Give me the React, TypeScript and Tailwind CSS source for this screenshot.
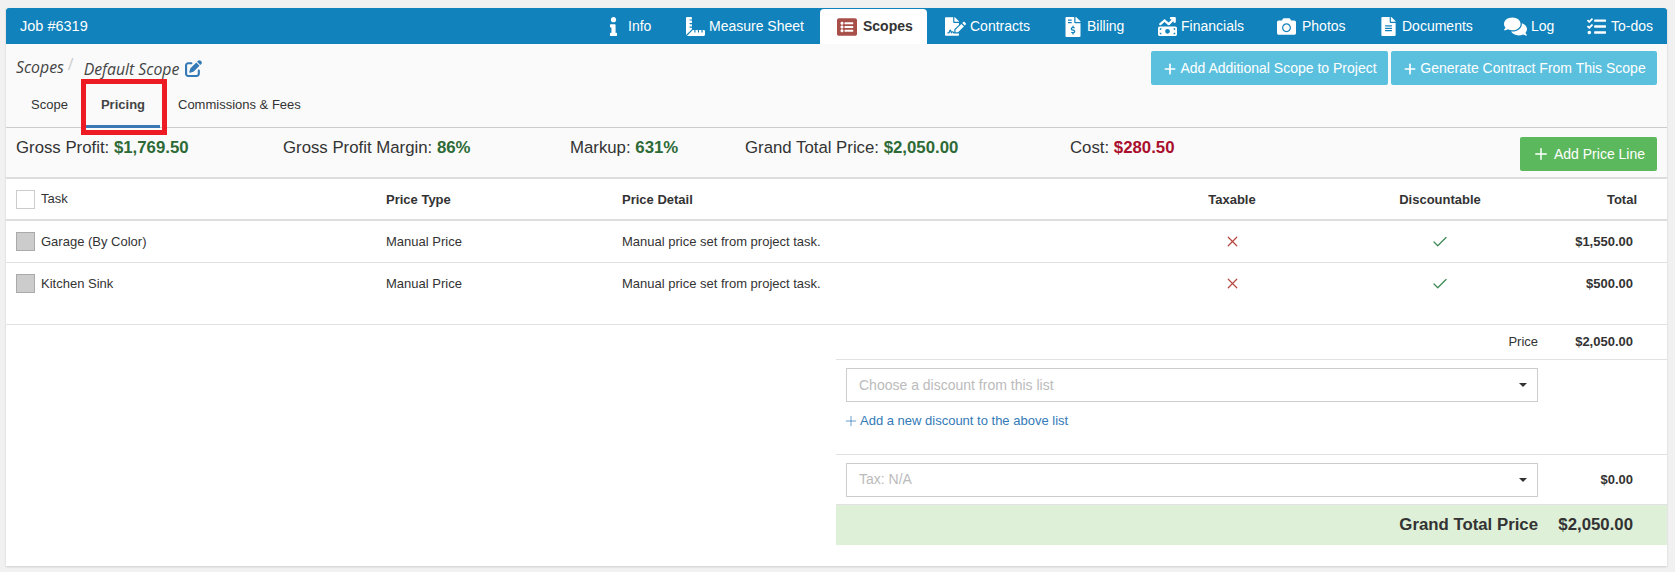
import type { ReactNode } from "react";
import {
  FaCamera,
  FaComments,
  FaFileAlt,
  FaFileInvoiceDollar,
  FaFileSignature,
  FaInfo,
  FaListAlt,
  FaRulerCombined,
  FaTasks,
} from "react-icons/fa";
import { FaMoneyBillTrendUp, FaPenToSquare } from "react-icons/fa6";
import { Check, Plus, X } from "lucide-react";

const navLeft = [
  { label: "Info", icon: <FaInfo size={19} />, box: "w-[82px] gap-[5px]" },
  { label: "Measure Sheet", icon: <FaRulerCombined size={19} />, box: "w-[134px] gap-[4px]" },
];

const navRight = [
  { label: "Contracts", icon: <FaFileSignature size={21} />, box: "w-[136px] pl-[18px] gap-[4px]" },
  { label: "Billing", icon: <FaFileInvoiceDollar size={20} />, box: "w-[95px] gap-[4px]" },
  { label: "Financials", icon: <FaMoneyBillTrendUp size={19} />, box: "w-[119px] gap-[4px]" },
  { label: "Photos", icon: <FaCamera size={19} />, box: "w-[102px] gap-[6px]" },
  { label: "Documents", icon: <FaFileAlt size={19} />, box: "w-[125px] gap-[4px]" },
  { label: "Log", icon: <FaComments size={23} />, box: "w-[83px] gap-[4px]" },
  { label: "To-dos", icon: <FaTasks size={19} />, box: "w-[80px] gap-[5px]" },
];

const NavItem = ({ label, icon, box }: { label: string; icon: ReactNode; box: string }) => (
  <div className={`flex h-full items-center ${box}`}>
    {icon}
    <span>{label}</span>
  </div>
);

const rows = [
  { task: "Garage (By Color)", total: "$1,550.00", cell: "h-[41px]" },
  { task: "Kitchen Sink", total: "$500.00", cell: "h-[41px] mb-[20px]" },
];

const cols = "grid grid-cols-[370px_235px_500px_200px_216px_140px]";

const Caret = () => (
  <span className="mr-[10px] h-0 w-0 border-x-[4px] border-t-[4px] border-x-transparent border-t-[#333]" />
);

const SelectBox = ({ text }: { text: string }) => (
  <div className="flex h-[34px] w-[692px] items-center justify-between border border-[#ccc] bg-white pl-3 text-[14px] text-[#bbb]">
    {text}
    <Caret />
  </div>
);

const App = () => {
  return (
    <div className="relative h-[572px] w-[1675px] bg-[#f1f1f1] pt-2 pl-[6px] font-['Liberation_Sans',Arial,sans-serif] text-[#333]">
      <div className="h-[558px] w-[1661px] bg-white shadow-[0_1px_2px_rgba(0,0,0,0.15)]">
        {/* top bar */}
        <div className="flex h-[36px] items-end justify-between rounded-t-[3px] bg-[#1182bb] text-[14px] text-white">
          <div className="flex h-[35px] items-center pl-[14px] text-[14.5px]">Job #6319</div>
          <div className="flex h-[35px] items-center">
            {navLeft.map((item) => (
              <NavItem key={item.label} {...item} />
            ))}
            <div className="flex h-[35px] w-[107px] items-center gap-[6px] self-end rounded-t-[4px] bg-white pl-[17px] font-bold text-[#333]">
              <FaListAlt size={20} className="text-[#a94f49]" />
              <span>Scopes</span>
            </div>
            {navRight.map((item) => (
              <NavItem key={item.label} {...item} />
            ))}
          </div>
        </div>

        {/* breadcrumb and sub tabs */}
        <div className="flex h-[84px] justify-between border-b border-[#ccc] bg-[#fafafa]">
          <div className="pl-[10px]">
            <div className="flex h-[41px] items-start pt-[12px] font-['Open_Sans',sans-serif] text-[15.8px] text-[#444] italic">
              <span>Scopes</span>
              <span className="-mt-[3px] ml-[4px] text-[#ccc] not-italic">/</span>
              <span className="mt-[2px] ml-[10px]">Default Scope</span>
              <FaPenToSquare size={17} className="mt-[4px] ml-[6px] text-[#337ab7]" />
            </div>
            <div className="-ml-[10px] flex pl-[7px] text-[13px]">
              <div className="flex h-[43px] w-[73px] items-center justify-center pb-[4px]">Scope</div>
              <div className="flex h-[43px] w-[74px] items-center justify-center border-b-[3px] border-[#3a77b5] pb-[1px] font-bold text-[#444]">
                Pricing
              </div>
              <div className="flex h-[43px] items-center pb-[4px] pl-[18px]">Commissions &amp; Fees</div>
            </div>
          </div>
          <div className="flex gap-[3px] pt-[7px] pr-[10px] text-[14px] text-white">
            <div className="flex h-[34px] w-[237px] items-center justify-center gap-[2px] rounded-[2px] bg-[#5bc0de] pt-[1px]">
              <Plus size={16} strokeWidth={2.5} />
              Add Additional Scope to Project
            </div>
            <div className="flex h-[34px] w-[266px] items-center justify-center gap-[2px] rounded-[2px] bg-[#5bc0de] pt-[1px]">
              <Plus size={16} strokeWidth={2.5} />
              Generate Contract From This Scope
            </div>
          </div>
        </div>

        {/* stats */}
        <div className="flex h-[51px] justify-between border-b-2 border-[#ddd] bg-[#fafafa] pr-[10px]">
          <div className="flex pt-[10px] pl-[10px] text-[16.8px] leading-[20px]">
            <div className="w-[267px]">
              Gross Profit: <b className="text-[#2d6a36]">$1,769.50</b>
            </div>
            <div className="w-[287px]">
              Gross Profit Margin: <b className="text-[#2d6a36]">86%</b>
            </div>
            <div className="w-[175px]">
              Markup: <b className="text-[#2d6a36]">631%</b>
            </div>
            <div className="w-[325px]">
              Grand Total Price: <b className="text-[#2d6a36]">$2,050.00</b>
            </div>
            <div>
              Cost: <b className="text-[#a90f2d]">$280.50</b>
            </div>
          </div>
          <div className="mt-[9px] flex h-[34px] w-[137px] items-center justify-center gap-[4px] rounded-[2px] bg-[#5cb85c] text-[14px] text-white">
            <Plus size={18} strokeWidth={2} />
            Add Price Line
          </div>
        </div>

        {/* table */}
        <div className={`${cols} h-[42px] items-center border-b-2 border-[#ddd] pt-[1px] text-[13px] font-bold`}>
          <div className="flex items-center gap-[6px] pl-[10px] font-normal">
            <span className="h-[19px] w-[19px] border border-[#ccc] bg-white" />
            <span className="-mt-[2px]">Task</span>
          </div>
          <div className="pl-[10px]">Price Type</div>
          <div className="pl-[11px]">Price Detail</div>
          <div className="pl-[42px] text-center">Taxable</div>
          <div className="pl-[42px] text-center">Discountable</div>
          <div className="pr-[30px] text-right">Total</div>
        </div>
        {rows.map((row) => (
          <div key={row.task} className="border-b border-[#e2e2e2]">
            <div className={`${cols} ${row.cell} items-center text-[13px]`}>
              <div className="flex items-center gap-[6px] pl-[10px]">
                <span className="h-[19px] w-[19px] border border-[#aaa] bg-[#ccc]" />
                <span>{row.task}</span>
              </div>
              <div className="pl-[10px]">Manual Price</div>
              <div className="pl-[11px]">Manual price set from project task.</div>
              <div className="flex justify-center pl-[42px] text-[#b5483f]">
                <X size={17} strokeWidth={1.7} />
              </div>
              <div className="flex justify-center pl-[42px] text-[#3f8a56]">
                <Check size={18} strokeWidth={1.7} />
              </div>
              <div className="pr-[34px] text-right font-bold">{row.total}</div>
            </div>
          </div>
        ))}

        {/* totals */}
        <div className="ml-[830px] text-[13px]">
          <div className="flex h-[35px] items-center border-b border-[#e2e2e2]">
            <div className="w-[702px] text-right">Price</div>
            <div className="w-[95px] text-right font-bold">$2,050.00</div>
          </div>
          <div className="h-[95px] border-b border-[#e2e2e2] pt-[8px] pl-[10px]">
            <SelectBox text="Choose a discount from this list" />
            <div className="mt-[9px] -ml-[3px] flex items-center gap-[1px] text-[#337ab7]">
              <Plus size={16} strokeWidth={1.1} />
              Add a new discount to the above list
            </div>
          </div>
          <div className="flex h-[50px] items-center border-b border-[#e2e2e2] pl-[10px]">
            <SelectBox text="Tax: N/A" />
            <div className="w-[95px] text-right font-bold">$0.00</div>
          </div>
          <div className="flex h-[40px] items-center bg-[#dff0d8] text-[16.8px] font-bold">
            <div className="w-[702px] text-right">Grand Total Price</div>
            <div className="w-[95px] text-right">$2,050.00</div>
          </div>
        </div>
      </div>

      {/* red annotation round the Pricing tab */}
      <div className="absolute top-[79px] left-[81px] h-[56px] w-[86px] border-[5px] border-[#ed1c24]" />
    </div>
  );
};

export default App;
